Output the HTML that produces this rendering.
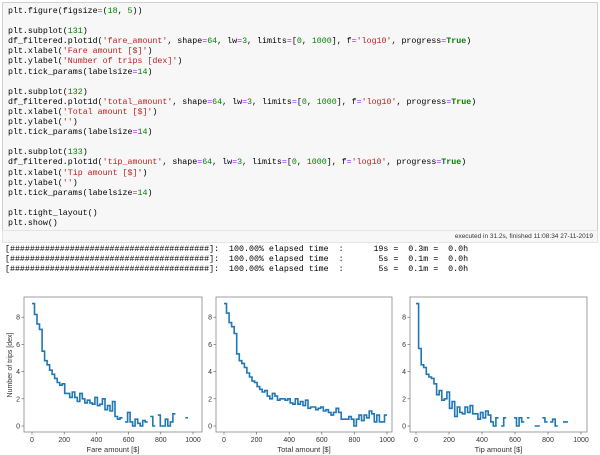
<!DOCTYPE html>
<html><head><meta charset="utf-8"><style>
body{margin:0;background:#fff;width:600px;height:455px;overflow:hidden;position:relative;font-family:"Liberation Mono",monospace;}
.cell{position:absolute;left:2px;top:2px;width:594px;height:227px;background:#f7f7f7;border:1px solid #cfcfcf;}
pre{margin:0;position:absolute;left:5px;top:4px;font-family:"Liberation Mono",monospace;font-size:8.3px;line-height:10.1px;color:#000;}
.s{color:#ba2121}.n{color:#008000}.o{color:#aa22ff}.k{color:#008000;font-weight:bold}
.ex{position:absolute;left:2px;top:230px;width:594px;height:11px;background:#f7f7f7;border:1px solid #e4e4e4;font-family:"Liberation Sans",sans-serif;font-size:6.5px;color:#333;text-align:right;line-height:11px;}
.ex span{padding-right:4px}
.out{position:absolute;left:5px;top:245px;font-size:8.3px;line-height:10px;margin:0;}
svg{position:absolute;left:0;top:290px;}
text{font-family:"Liberation Sans",sans-serif;font-size:7px;fill:#333}
</style></head><body>
<div class="cell"><pre>plt.figure(figsize<span class="o">=</span>(<span class="n">18</span>, <span class="n">5</span>))

plt.subplot(<span class="n">131</span>)
df_filtered.plot1d(<span class="s">'fare_amount'</span>, shape<span class="o">=</span><span class="n">64</span>, lw<span class="o">=</span><span class="n">3</span>, limits<span class="o">=</span>[<span class="n">0</span>, <span class="n">1000</span>], f<span class="o">=</span><span class="s">'log10'</span>, progress<span class="o">=</span><span class="k">True</span>)
plt.xlabel(<span class="s">'Fare amount [$]'</span>)
plt.ylabel(<span class="s">'Number of trips [dex]'</span>)
plt.tick_params(labelsize<span class="o">=</span><span class="n">14</span>)

plt.subplot(<span class="n">132</span>)
df_filtered.plot1d(<span class="s">'total_amount'</span>, shape<span class="o">=</span><span class="n">64</span>, lw<span class="o">=</span><span class="n">3</span>, limits<span class="o">=</span>[<span class="n">0</span>, <span class="n">1000</span>], f<span class="o">=</span><span class="s">'log10'</span>, progress<span class="o">=</span><span class="k">True</span>)
plt.xlabel(<span class="s">'Total amount [$]'</span>)
plt.ylabel(<span class="s">''</span>)
plt.tick_params(labelsize<span class="o">=</span><span class="n">14</span>)

plt.subplot(<span class="n">133</span>)
df_filtered.plot1d(<span class="s">'tip_amount'</span>, shape<span class="o">=</span><span class="n">64</span>, lw<span class="o">=</span><span class="n">3</span>, limits<span class="o">=</span>[<span class="n">0</span>, <span class="n">1000</span>], f<span class="o">=</span><span class="s">'log10'</span>, progress<span class="o">=</span><span class="k">True</span>)
plt.xlabel(<span class="s">'Tip amount [$]'</span>)
plt.ylabel(<span class="s">''</span>)
plt.tick_params(labelsize<span class="o">=</span><span class="n">14</span>)

plt.tight_layout()
plt.show()</pre></div>
<div class="ex"><span>executed in 31.2s, finished 11:08:34 27-11-2019</span></div>
<pre class="out">[########################################]:  100.00% elapsed time  :      19s =  0.3m =  0.0h
[########################################]:  100.00% elapsed time  :       5s =  0.1m =  0.0h
[########################################]:  100.00% elapsed time  :       5s =  0.1m =  0.0h</pre>
<svg id="plots" width="600" height="165"></svg>
<script>
(function(){
var N=null;
var d1=[9,8.2,7.5,7.1,5.5,4.8,4.5,4.1,3.8,3.5,3.2,3.0,3.1,2.4,2.4,2.1,2.5,2.1,1.8,2.4,2.0,1.7,1.9,1.7,1.6,2.1,1.5,1.6,2.0,1.2,1.5,1.1,1.8,0.7,0.5,0.6,N,0.3,1.0,0.3,0,0.5,0.2,0,0.4,0.3,N,0.7,0,N,0.8,0,0,0.5,0,0.3,0.9,N,N,N,N,0.6,N,N];
var d2=[9,8.3,7.6,7.3,6.8,5.3,4.8,4.6,4.3,3.9,3.6,3.3,3.2,2.9,2.7,2.5,2.6,2.2,2.0,2.4,2.2,1.9,2.0,2.0,1.9,2.0,1.7,1.6,2.0,1.6,1.8,1.5,1.9,1.3,1.4,1.4,1.2,1.3,1.4,1.1,1.2,1.0,0.8,1.0,1.3,1.0,0.5,0.5,0.5,0.7,0.5,0,0.5,0.8,0.4,0.8,0.6,1.1,0.9,0.3,0.8,0.3,0.3,0.8];
var d3=[9,5.7,4.5,4.3,3.8,3.6,3.5,3.1,2.3,2.6,1.9,2.0,2.5,1.3,1.8,0.7,1.4,1.0,0.9,1.4,1.0,1.5,0.9,0.9,0.5,1.0,0.6,1.1,0.8,0.3,0,0.6,N,0,0.6,N,N,N,0.6,0,0.6,0.3,N,0.6,N,N,0,0,N,0.6,0.3,N,0.3,0.5,0,N,N,0.3,0.3,N,N,N,N,N];
var P=[{l:24,r:202,x0:32,x1:193,d:d1,lab:'Fare amount [$]'},{l:216,r:392,x0:224,x1:387,d:d2,lab:'Total amount [$]'},{l:410,r:587,x0:416,x1:581,d:d3,lab:'Tip amount [$]'}];
var T=7,B=142,y0=136,sy=13.6,s='';
P.forEach(function(p){
 s+='<rect x="'+p.l+'" y="'+T+'" width="'+(p.r-p.l)+'" height="'+(B-T)+'" fill="none" stroke="#888" stroke-width="0.8"/>';
 var sx=(p.x1-p.x0)/1000;
 for(var v=0;v<=1000;v+=200){var x=p.x0+v*sx;s+='<line x1="'+x+'" y1="'+B+'" x2="'+x+'" y2="'+(B+2.5)+'" stroke="#555" stroke-width="0.6"/><text x="'+x+'" y="'+(B+10)+'" text-anchor="middle">'+v+'</text>';}
 for(var k=0;k<=8;k+=2){var y=y0-k*sy;s+='<line x1="'+(p.l-2.5)+'" y1="'+y+'" x2="'+p.l+'" y2="'+y+'" stroke="#555" stroke-width="0.6"/><text x="'+(p.l-4)+'" y="'+(y+2.5)+'" text-anchor="end">'+k+'</text>';}
 s+='<text x="'+((p.l+p.r)/2)+'" y="'+(B+20)+'" text-anchor="middle" style="font-size:7.5px">'+p.lab+'</text>';
 var w=1000/64,path='',prev=N;
 for(var i=0;i<64;i++){var v=p.d[i];var xa=p.x0+i*w*sx,xb=p.x0+(i+1)*w*sx;
  if(v===N){prev=N;continue;}var y=y0-v*sy;
  if(prev===N)path+='M'+xa.toFixed(1)+' '+y.toFixed(1);else path+='L'+xa.toFixed(1)+' '+y.toFixed(1);
  path+='L'+xb.toFixed(1)+' '+y.toFixed(1);prev=v;}
 s+='<path d="'+path+'" fill="none" stroke="#1f77b4" stroke-width="1.6"/>';
});
s+='<text transform="translate(12,75) rotate(-90)" text-anchor="middle" style="font-size:7px">Number of trips [dex]</text>';
document.getElementById('plots').innerHTML=s;
})();
</script>
</body></html>
